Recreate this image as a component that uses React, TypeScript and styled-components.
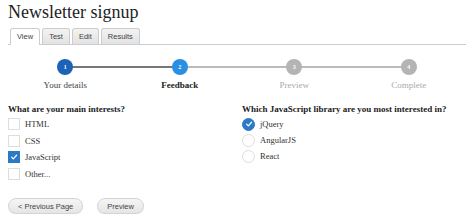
import React from "react";
import styled, { createGlobalStyle } from "styled-components";

const Global = createGlobalStyle`
  html, body { margin: 0; padding: 0; background: #fff; }
  body { font-family: "Liberation Serif", "Times New Roman", serif; color: #333; }
`;

const Page = styled.div`
  padding: 2px 8px 0 8px;
  width: 458px;
`;

const Title = styled.h1`
  margin: 0;
  font-family: "Liberation Serif", Georgia, serif;
  font-weight: normal;
  font-size: 18px;
  line-height: 20px;
  color: #222;
`;

const Tabs = styled.div`
  display: flex;
  gap: 2px;
  padding-left: 2px;
  margin-top: 6px;
  border-bottom: 1px solid #ccc;
  height: 16px;
  align-items: flex-end;
`;

const Tab = styled.div<{ $active?: boolean }>`
  font-family: "Liberation Sans", Arial, sans-serif;
  font-size: 7.5px;
  color: #444;
  padding: 0 6px;
  height: ${(p) => (p.$active ? "16px" : "15px")};
  line-height: 15px;
  border: 1px solid #ccc;
  border-bottom: none;
  border-radius: 3px 3px 0 0;
  background: ${(p) => (p.$active ? "#fff" : "linear-gradient(#f3f3f3, #e2e2e2)")};
  margin-bottom: ${(p) => (p.$active ? "-1px" : "0")};
`;

const Steps = styled.div`
  display: grid;
  grid-template-columns: repeat(4, 1fr);
  margin-top: 14px;
`;

const Step = styled.div`
  position: relative;
  display: flex;
  flex-direction: column;
  align-items: center;
`;

const Line = styled.div<{ $color: string }>`
  position: absolute;
  top: 8px;
  left: 50%;
  width: 100%;
  height: 2px;
  margin-top: -1px;
  background: ${(p) => p.$color};
`;

const Dot = styled.div<{ $bg: string }>`
  position: relative;
  width: 16px;
  height: 16px;
  border-radius: 50%;
  background: ${(p) => p.$bg};
  color: #fff;
  font-family: "Liberation Serif", serif;
  font-size: 6px;
  font-weight: bold;
  display: flex;
  align-items: center;
  justify-content: center;
`;

const StepLabel = styled.div<{ $color: string; $bold?: boolean }>`
  margin-top: 5px;
  font-size: 9px;
  line-height: 11px;
  color: ${(p) => p.$color};
  font-weight: ${(p) => (p.$bold ? "bold" : "normal")};
`;

const Questions = styled.div`
  display: grid;
  grid-template-columns: 234px 1fr;
  margin-top: 13px;
`;

const Question = styled.div`
  display: flex;
  flex-direction: column;
`;

const QLabel = styled.div`
  font-size: 9px;
  font-weight: bold;
  color: #222;
  line-height: 11px;
  margin-bottom: 1px;
`;

const Option = styled.label<{ $round?: boolean }>`
  display: flex;
  align-items: center;
  gap: 5px;
  height: ${(p) => (p.$round ? "16px" : "16.5px")};
  font-size: 8.5px;
  color: #333;
`;

const Box = styled.span<{ $checked?: boolean; $round?: boolean }>`
  box-sizing: border-box;
  width: ${(p) => (p.$round ? "13px" : "12px")};
  height: ${(p) => (p.$round ? "13px" : "12px")};
  border-radius: ${(p) => (p.$round ? "50%" : "0")};
  border: 1px solid ${(p) => (p.$checked ? "#2a7ac4" : "#ddd")};
  background: ${(p) => (p.$checked ? "#2a7ac4" : "#fff")};
  display: flex;
  align-items: center;
  justify-content: center;
  flex: none;
`;

const Buttons = styled.div`
  display: flex;
  gap: 14px;
  margin-top: 16px;
`;

const Button = styled.button`
  font-family: "Liberation Sans", Arial, sans-serif;
  font-size: 7.5px;
  color: #444;
  height: 16px;
  padding: 0 9px;
  border: 1px solid #d4d4d4;
  border-radius: 8px;
  background: linear-gradient(#f5f5f5, #e5e5e5);
  box-shadow: 0 1px 1px rgba(0,0,0,0.08);
`;

const Check = () => (
  <svg width="8" height="8" viewBox="0 0 10 10">
    <path d="M2 5.2 L4.2 7.3 L8.2 2.8" stroke="#fff" strokeWidth="1.6" fill="none" strokeLinecap="round" strokeLinejoin="round" />
  </svg>
);

const steps = [
  { n: 1, label: "Your details", bg: "#1c63b8", color: "#444", line: "#777" },
  { n: 2, label: "Feedback", bg: "#2a8fe3", color: "#222", bold: true, line: "#bbb" },
  { n: 3, label: "Preview", bg: "#b4b4b4", color: "#aaa", line: "#bbb" },
  { n: 4, label: "Complete", bg: "#b4b4b4", color: "#aaa" },
];

export default function App() {
  return (
    <Page>
      <Global />
      <Title>Newsletter signup</Title>
      <Tabs>
        <Tab $active>View</Tab>
        <Tab>Test</Tab>
        <Tab>Edit</Tab>
        <Tab>Results</Tab>
      </Tabs>
      <Steps>
        {steps.map((s) => (
          <Step key={s.n}>
            {s.line && <Line $color={s.line} />}
            <Dot $bg={s.bg}>{s.n}</Dot>
            <StepLabel $color={s.color} $bold={s.bold}>{s.label}</StepLabel>
          </Step>
        ))}
      </Steps>
      <Questions>
        <Question>
          <QLabel>What are your main interests?</QLabel>
          {["HTML", "CSS", "JavaScript", "Other..."].map((o) => (
            <Option key={o}>
              <Box $checked={o === "JavaScript"}>{o === "JavaScript" && <Check />}</Box>
              {o}
            </Option>
          ))}
        </Question>
        <Question>
          <QLabel>Which JavaScript library are you most interested in?</QLabel>
          {["jQuery", "AngularJS", "React"].map((o) => (
            <Option key={o} $round>
              <Box $round $checked={o === "jQuery"}>{o === "jQuery" && <Check />}</Box>
              {o}
            </Option>
          ))}
        </Question>
      </Questions>
      <Buttons>
        <Button>&lt; Previous Page</Button>
        <Button>Preview</Button>
      </Buttons>
    </Page>
  );
}
